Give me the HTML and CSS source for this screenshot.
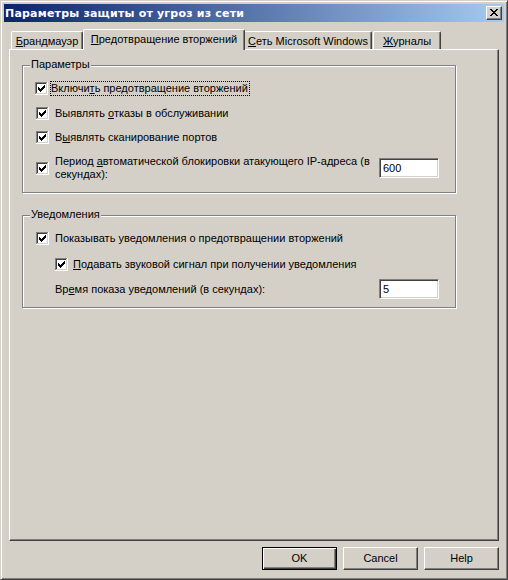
FILE: index.html
```html
<!DOCTYPE html>
<html lang="ru">
<head>
<meta charset="utf-8">
<title>Параметры защиты от угроз из сети</title>
<link rel="stylesheet" href="styles.css">
</head>
<body>
<svg class="defs" width="0" height="0" aria-hidden="true">
  <symbol id="chk" viewBox="0 0 13 13">
    <path fill="#808080" d="M0 0h12v1H1v11H0z"/>
    <path fill="#fff" d="M12 0h1v13H0v-1h12z"/>
    <path fill="#404040" d="M1 1h10v1H2v9H1z"/>
    <path fill="#d4d0c8" d="M11 1h1v11H1v-1h10z"/>
    <rect x="2" y="2" width="9" height="9" fill="#fff"/>
    <path fill="#000" d="M3 5V8H4V9H5V10H6V9H7V8H8V7H9V6H10V3H9V4H8V5H7V6H6V7H5V6H4V5Z"/>
  </symbol>
</svg>
<div class="window">
  <div class="titlebar">
    <span class="title">Параметры защиты от угроз из сети</span>
    <span class="close"><svg width="8" height="7" viewBox="0 0 8 7" shape-rendering="crispEdges"><path fill="#000" d="M0 0h2v1H0zM6 0h2v1H6zM1 1h2v1H1zM5 1h2v1H5zM2 2h4v1H2zM3 3h2v1H3zM2 4h4v1H2zM1 5h2v1H1zM5 5h2v1H5zM0 6h2v1H0zM6 6h2v1H6z"/></svg></span>
  </div>
  <div class="body">
    <div class="tabs">
      <div class="tab t1"><u>Б</u>рандмауэр</div>
      <div class="tab t2 sel"><u>П</u>редотвращение вторжений</div>
      <div class="tab t3"><u>С</u>еть Microsoft Windows</div>
      <div class="tab t4"><u>Ж</u>урналы</div>
    </div>
    <div class="panel">
      <div class="group g1">
        <span class="legend">Параметры</span>
        <div class="row r1">
          <svg class="cb" width="13" height="13"><use href="#chk"/></svg>
          <span class="lbl focus">Включи<u>т</u>ь предотвращение вторжений</span>
        </div>
        <div class="row r2">
          <svg class="cb" width="13" height="13"><use href="#chk"/></svg>
          <span class="lbl">Выявлять <u>о</u>тказы в обслуживании</span>
        </div>
        <div class="row r3">
          <svg class="cb" width="13" height="13"><use href="#chk"/></svg>
          <span class="lbl">В<u>ы</u>являть сканирование портов</span>
        </div>
        <div class="row r4">
          <svg class="cb" width="13" height="13"><use href="#chk"/></svg>
          <span class="lbl">Период <u>а</u>втоматической блокировки атакующего IP-адреса (в<br>секундах):</span>
          <span class="edit">600</span>
        </div>
      </div>
      <div class="group g2">
        <span class="legend">Уведомления</span>
        <div class="row ra">
          <svg class="cb" width="13" height="13"><use href="#chk"/></svg>
          <span class="lbl">Показывать уведомления о предотвращении вторжений</span>
        </div>
        <div class="row rb">
          <svg class="cb" width="13" height="13"><use href="#chk"/></svg>
          <span class="lbl"><u>П</u>одавать звуковой сигнал при получении уведомления</span>
        </div>
        <div class="row rc">
          <span class="lbl">Вр<u>е</u>мя показа уведомлений (в секундах):</span>
          <span class="edit">5</span>
        </div>
      </div>
    </div>
    <div class="buttons">
      <span class="btn def">OK</span>
      <span class="btn">Cancel</span>
      <span class="btn">Help</span>
    </div>
  </div>
</div>
</body>
</html>
```
FILE: styles.css
```css
* { box-sizing: border-box; }
html, body { margin: 0; padding: 0; }
body {
  background: #d4d0c8;
  font-family: "Liberation Sans", Arial, sans-serif;
  font-size: 11px;
  line-height: 13px;
  color: #000;
}
.defs { position: absolute; width: 0; height: 0; overflow: hidden; }
u { text-decoration: underline; text-underline-offset: 1px; }

.window {
  width: 508px;
  height: 580px;
  background: #d4d0c8;
  border: 1px solid;
  border-color: #d4d0c8 #404040 #404040 #d4d0c8;
  box-shadow: inset 1px 1px #fff, inset -1px -1px #808080;
  padding: 3px;
  display: flex;
  flex-direction: column;
}

.titlebar {
  height: 18px;
  flex: none;
  display: flex;
  align-items: center;
  justify-content: space-between;
  background: linear-gradient(to right, #0a246a, #a6caf0);
  color: #fff;
  font-family: "DejaVu Sans", "Liberation Sans", sans-serif;
  font-weight: bold;
  font-size: 11px;
  letter-spacing: 0.2px;
  padding-left: 1px;
  padding-right: 2px;
}
.title { white-space: nowrap; }
.close {
  width: 16px;
  height: 14px;
  background: #d4d0c8;
  border: 1px solid;
  border-color: #fff #404040 #404040 #fff;
  box-shadow: inset -1px -1px #808080;
  display: flex;
  align-items: center;
  justify-content: center;
}
.close svg { display: block; margin: -1px 0 0 -1px; }

.body {
  flex: 1;
  padding: 7px 5px 0 5px;
  display: flex;
  flex-direction: column;
}

.tabs {
  height: 20px;
  display: flex;
  align-items: flex-end;
  padding-left: 2px;
}
.tab {
  height: 18px;
  border-top: 1px solid #fff;
  border-left: 1px solid #fff;
  border-right: 1px solid #404040;
  box-shadow: inset -1px 0 #808080;
  border-top-left-radius: 2px;
  border-top-right-radius: 2px;
  display: flex;
  align-items: center;
  justify-content: center;
  padding-top: 1px;
  white-space: nowrap;
}
.tab.sel {
  height: 21px;
  margin-bottom: -1px;
  position: relative;
  z-index: 1;
  background: #d4d0c8;
  padding-bottom: 3px;
}
.t1 { width: 72px; }
.t2 { width: 162px; }
.t3 { width: 127px; border-left: none; border-top-left-radius: 0; }
.t4 { width: 68px; margin-left: 1px; }

.panel {
  height: 492px;
  border: 1px solid;
  border-color: #fff #404040 #404040 #fff;
  box-shadow: inset -1px -1px #808080;
  padding: 15px 0 0 12px;
}

.group {
  position: relative;
  width: 434px;
  border: 1px solid #808080;
  box-shadow: inset 1px 1px #fff, 1px 1px #fff;
  padding-right: 16px;
}
.g1 { height: 128px; padding-top: 15px; }
.g2 { height: 93px; margin-top: 22px; padding-top: 16px; }
.legend {
  position: absolute;
  left: 7px;
  top: -8px;
  padding: 0 1px;
  background: #d4d0c8;
}

.row { display: flex; align-items: center; }
.cb { flex: none; display: block; }
.lbl { white-space: nowrap; }

.r1 { height: 15px; padding-left: 12px; }
.r1 .lbl { margin-left: 2px; border: 1px dotted #000; padding-right: 1px; }
.r2 { height: 15px; margin-top: 10px; padding-left: 13px; }
.r3 { height: 15px; margin-top: 9px; padding-left: 13px; }
.r4 { height: 26px; margin-top: 10px; padding-left: 13px; }
.r2 .lbl, .r3 .lbl, .r4 .lbl { margin-left: 6px; }

.ra { height: 13px; padding-left: 13px; }
.ra .lbl { margin-left: 6px; }
.rb { height: 13px; margin-top: 13px; padding-left: 32px; }
.rb .lbl { margin-left: 5px; }
.rc { height: 20px; margin-top: 8px; padding-left: 32px; }

.edit {
  margin-left: auto;
  flex: none;
  width: 60px;
  height: 20px;
  background: #fff;
  border: 1px solid;
  border-color: #808080 #fff #fff #808080;
  box-shadow: inset 1px 1px #404040, inset -1px -1px #d4d0c8;
  padding: 3px 0 0 3px;
}

.buttons {
  display: flex;
  justify-content: flex-end;
  gap: 6px;
  margin-top: 6px;
}
.btn {
  width: 75px;
  height: 23px;
  display: flex;
  align-items: center;
  justify-content: center;
  border: 1px solid;
  border-color: #fff #404040 #404040 #fff;
  box-shadow: inset -1px -1px #808080;
}
.btn.def {
  border-color: #000;
  box-shadow: inset 1px 1px #fff, inset -1px -1px #404040, inset -2px -2px #808080;
}
```
